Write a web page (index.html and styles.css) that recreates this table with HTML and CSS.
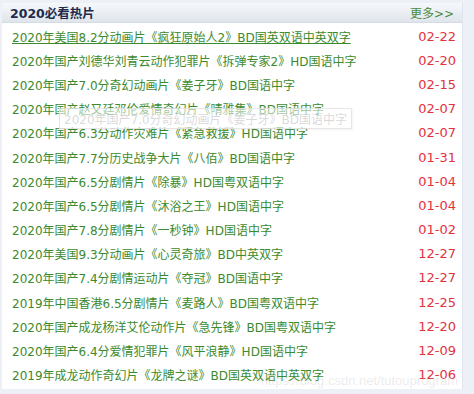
FILE: index.html
```html
<!DOCTYPE html>
<html>
<head>
<meta charset="utf-8">
<link rel="stylesheet" href="styles.css">
</head>
<body>
<div class="page">
  <div class="panel">
    <div class="head">
      <span class="title">2020必看热片</span>
      <a class="more">更多&gt;&gt;</a>
    </div>
    <ul class="list">
      <li class="row hover"><a>2020年美国8.2分动画片《疯狂原始人2》BD国英双语中英双字</a><span class="date">02-22</span></li>
      <li class="row"><a>2020年国产刘德华刘青云动作犯罪片《拆弹专家2》HD国语中字</a><span class="date">02-20</span></li>
      <li class="row"><a>2020年国产7.0分奇幻动画片《姜子牙》BD国语中字</a><span class="date">02-15</span></li>
      <li class="row"><a>2020年国产赵又廷邓伦爱情奇幻片《晴雅集》BD国语中字</a><span class="date">02-07</span></li>
      <li class="row"><a>2020年国产6.3分动作灾难片《紧急救援》HD国语中字</a><span class="date">02-07</span></li>
      <li class="row"><a>2020年国产7.7分历史战争大片《八佰》BD国语中字</a><span class="date">01-31</span></li>
      <li class="row"><a>2020年国产6.5分剧情片《除暴》HD国粤双语中字</a><span class="date">01-04</span></li>
      <li class="row"><a>2020年国产6.5分剧情片《沐浴之王》HD国语中字</a><span class="date">01-04</span></li>
      <li class="row"><a>2020年国产7.8分剧情片《一秒钟》HD国语中字</a><span class="date">01-02</span></li>
      <li class="row"><a>2020年美国9.3分动画片《心灵奇旅》BD中英双字</a><span class="date">12-27</span></li>
      <li class="row"><a>2020年国产7.4分剧情运动片《夺冠》BD国语中字</a><span class="date">12-27</span></li>
      <li class="row"><a>2019年中国香港6.5分剧情片《麦路人》BD国粤双语中字</a><span class="date">12-25</span></li>
      <li class="row"><a>2020年国产成龙杨洋艾伦动作片《急先锋》BD国粤双语中字</a><span class="date">12-20</span></li>
      <li class="row"><a>2020年国产6.4分爱情犯罪片《风平浪静》HD国语中字</a><span class="date">12-09</span></li>
      <li class="row"><a>2019年成龙动作奇幻片《龙牌之谜》BD国英双语中英双字</a><span class="date">12-06</span></li>
    </ul>
    <div class="tip">2020年国产7.0分奇幻动画片《姜子牙》BD国语中字</div>
    <div class="mark">https://blog.csdn.net/tutouprogram</div>
  </div>
</div>
</body>
</html>
```

FILE: styles.css
```css
* { box-sizing: border-box; }
html, body { margin: 0; padding: 0; }
body {
  background: #edf1f7;
  font-family: "DejaVu Sans", "Noto Sans CJK SC", sans-serif;
  font-size: 12px;
  width: 474px;
  height: 394px;
  overflow: hidden;
}
.page {
  padding: 3px 11px 0 2px;
}
.panel {
  position: relative;
  background: #fff;
  width: 461px;
  height: 386px;
  border-right: 1px solid #dfe5ee;
}
.head {
  height: 20px;
  display: flex;
  align-items: center;
  justify-content: space-between;
  padding: 0 8px 0 8px;
  background: linear-gradient(#f6f8fb, #dfe5ec);
  border-bottom: 1px solid #d4dbe4;
}
.title {
  font-weight: bold;
  color: #1c2b4c;
  font-size: 12.5px;
}
.more {
  color: #4a8a3a;
  font-size: 12px;
}
.list {
  list-style: none;
  margin: 0;
  padding: 1px 0 0 0;
}
.row {
  height: 24.2px;
  display: flex;
  align-items: center;
  justify-content: space-between;
  padding: 0 6px 0 10px;
}
.row a {
  color: #3b8a2e;
}
.row.hover a {
  text-decoration: underline;
}
.date {
  color: #e2323e;
  font-size: 13px;
}
.tip {
  position: absolute;
  left: 57px;
  top: 105px;
  padding: 1px 4px;
  background: rgba(255,255,255,0.55);
  border: 1px solid rgba(220,220,220,0.7);
  color: rgba(170,170,170,0.45);
  font-size: 12px;
  box-shadow: 1px 1px 2px rgba(0,0,0,0.05);
}
.mark {
  position: absolute;
  right: 4px;
  bottom: 1px;
  color: rgba(160,160,170,0.22);
  font-size: 13px;
  font-family: "Liberation Sans", sans-serif;
}
```
